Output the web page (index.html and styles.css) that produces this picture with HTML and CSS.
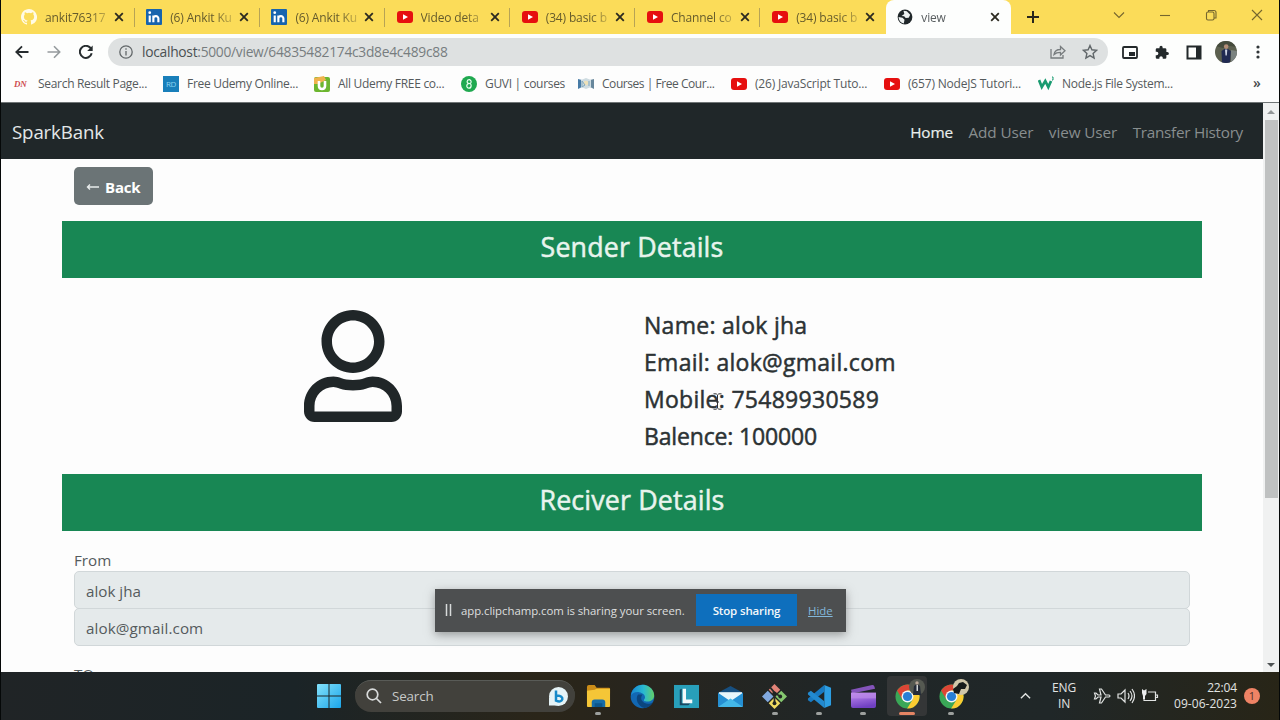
FILE: index.html
```html
<!DOCTYPE html>
<html lang="en">
<head>
<meta charset="utf-8">
<title>view</title>
<link rel="stylesheet" href="styles.css">
</head>
<body>
<svg class="defs" width="0" height="0" aria-hidden="true">
  <symbol id="youtube" viewBox="0 0 16 12"><rect width="16" height="12" rx="3" fill="#e60f0f"/><path d="M6 3.3v5.4L11 6z" fill="#fff"/></symbol>
  <symbol id="linkedin" viewBox="0 0 15 15"><rect width="15" height="15" rx="1" fill="#1764ae"/><path d="M3.5 6v6.5M6.9 12.5V6M6.9 9c0-3 4.7-3.2 4.7 0v3.5" fill="none" stroke="#fff" stroke-width="2"/><circle cx="3.5" cy="3.4" r="1.3" fill="#fff"/></symbol>
  <symbol id="cross" viewBox="0 0 10 10"><path d="M1.2 1.2l7.6 7.6M8.8 1.2L1.2 8.8" stroke="#2c2a20" stroke-width="1.8" fill="none"/></symbol>
  <symbol id="chrome" viewBox="0 0 26 26"><circle cx="13" cy="13" r="12.5" fill="#3aa757"/><path d="M2.2 6.8A12.5 12.5 0 0 1 23.8 6.8H13L7.6 16.2z" fill="#dd4535"/><path d="M23.8 6.8A12.5 12.5 0 0 1 12.6 25.5L18.4 16.2 13 6.8z" fill="#fccc31"/><circle cx="13" cy="13" r="6.2" fill="#f4f6f4"/><circle cx="13" cy="13" r="4.8" fill="#287fd6"/></symbol>
</svg>
<div class="screen">
  <header class="tabs">
    <div class="tab"><svg class="fav" viewBox="0 0 16 16"><path fill="#fffbe6" d="M8 0C3.58 0 0 3.58 0 8c0 3.54 2.29 6.53 5.47 7.59.4.07.55-.17.55-.38v-1.49c-2.01.37-2.53-.49-2.69-.94-.09-.23-.48-.94-.82-1.13-.28-.15-.68-.52-.01-.53.63-.01 1.08.58 1.23.82.72 1.21 1.87.87 2.33.66.07-.52.28-.87.51-1.07-1.78-.2-3.64-.89-3.64-3.95 0-.87.31-1.59.82-2.15-.08-.2-.36-1.02.08-2.12 0 0 .67-.21 2.2.82a7.6 7.6 0 0 1 4 0c1.53-1.04 2.2-.82 2.2-.82.44 1.1.16 1.92.08 2.12.51.56.82 1.27.82 2.15 0 3.07-1.87 3.75-3.65 3.95.29.25.54.73.54 1.48v2.2c0 .21.15.46.55.38A8 8 0 0 0 8 0z"/></svg><span class="tab-name">ankit76317</span><svg class="close"><use href="#cross"/></svg></div>
    <div class="tab"><svg class="fav"><use href="#linkedin"/></svg><span class="tab-name">(6) Ankit Ku</span><svg class="close"><use href="#cross"/></svg></div>
    <div class="tab"><svg class="fav"><use href="#linkedin"/></svg><span class="tab-name">(6) Ankit Ku</span><svg class="close"><use href="#cross"/></svg></div>
    <div class="tab"><svg class="fav"><use href="#youtube"/></svg><span class="tab-name">Video deta</span><svg class="close"><use href="#cross"/></svg></div>
    <div class="tab"><svg class="fav"><use href="#youtube"/></svg><span class="tab-name">(34) basic b</span><svg class="close"><use href="#cross"/></svg></div>
    <div class="tab"><svg class="fav"><use href="#youtube"/></svg><span class="tab-name">Channel co</span><svg class="close"><use href="#cross"/></svg></div>
    <div class="tab last"><svg class="fav"><use href="#youtube"/></svg><span class="tab-name">(34) basic b</span><svg class="close"><use href="#cross"/></svg></div>
    <div class="tab active"><svg class="fav" viewBox="0 0 16 16"><circle cx="8" cy="8" r="7.4" fill="#20272a"/><path d="M1.500 8l4 .8 2 2-.7 3.600C4 14 1.800 11.600 1.500 8zM6.500 1.800l3.300.4 3.400 3.500-1.500 3-3 .3-1.500-1.700L4.600 7 7.300 5z" fill="#eef2f2"/></svg><span class="tab-name">view</span><svg class="close"><use href="#cross"/></svg></div>
    <svg class="new-tab" viewBox="0 0 12 12"><path d="M6 0v12M0 6h12" stroke="#28261c" stroke-width="2"/></svg>
    <div class="window-controls">
      <svg viewBox="0 0 12 12"><path d="M1 3.500l5 5 5-5"/></svg>
      <svg viewBox="0 0 12 12"><path d="M1 6.500h10"/></svg>
      <svg viewBox="0 0 12 12"><rect x="1.500" y="3" width="7.500" height="8" rx="1.500"/><path d="M3.500 3V1.500h5.500q2 0 2 2V9H9"/></svg>
      <svg viewBox="0 0 12 12"><path d="M1 1l10 10M11 1L1 11"/></svg>
    </div>
  </header>

  <div class="toolbar">
    <svg class="tool back" viewBox="0 0 14 14"><path d="M13.500 7H1.500M7 1.300L1.300 7 7 12.700" stroke="#262c2e" stroke-width="1.800"/></svg>
    <svg class="tool forward" viewBox="0 0 14 14"><path d="M.5 7h12M7 1.300L12.700 7 7 12.700" stroke="#959b9d" stroke-width="1.600"/></svg>
    <svg class="tool reload" viewBox="0 0 14 14"><path d="M12.700 8.300A6 6 0 1 1 11.300 2.800L12.500 4" stroke="#262c2e" stroke-width="2"/><path d="M13.700.5v5.500H8.200z" fill="#262c2e"/></svg>
    <div class="address">
      <svg class="info" viewBox="0 0 14 14"><circle cx="7" cy="7" r="6.200"/><path d="M7 6v4.500M7 3.300v1.500"/></svg>
      <span class="url"><b>localhost</b>:5000/view/64835482174c3d8e4c489c88</span>
      <svg class="share" viewBox="0 0 16 14"><path d="M1 4v9h12v-3M4 9.500C4.500 6 7 4.500 10.500 4.500V1.500L15 5.800 10.500 10V7.300C7.500 7.300 5.500 8 4 9.500z"/></svg>
      <svg class="star" viewBox="0 0 16 16"><path d="M8 1.500l1.900 4.300 4.600.5-3.400 3.100 1 4.600L8 11.600 3.900 14l1-4.600L1.500 6.300l4.600-.5z"/></svg>
    </div>
    <svg class="ext" viewBox="0 0 16 14"><rect x="1" y="1.500" width="14" height="11" rx="1" fill="none" stroke="#23292b" stroke-width="1.800"/><rect x="7" y="6.500" width="6" height="4" fill="#23292b"/></svg>
    <svg class="ext" viewBox="0 0 24 24"><path fill="#23292b" d="M20.500 11H19V7a2 2 0 0 0-2-2h-4V3.500a2.500 2.500 0 0 0-5 0V5H4a2 2 0 0 0-2 2v3.800h1.500a2.700 2.700 0 0 1 0 5.400H2V20a2 2 0 0 0 2 2h3.800v-1.500a2.700 2.700 0 0 1 5.400 0V22H17a2 2 0 0 0 2-2v-4h1.500a2.500 2.500 0 0 0 0-5z"/></svg>
    <svg class="ext" viewBox="0 0 16 14"><path d="M1.500 1h13v12h-13z" fill="none" stroke="#23292b" stroke-width="2"/><path d="M10 1h5v12h-5z" fill="#23292b"/></svg>
    <svg class="avatar" viewBox="0 0 22 22"><clipPath id="round"><circle cx="11" cy="11" r="11"/></clipPath><g clip-path="url(#round)"><path d="M0 0h22v22H0z" fill="#5c604f"/><path d="M0 0h22v6L15 5 8 7 0 5z" fill="#454b3c"/><path d="M7 22l-.5-12L9.500 8h3.500l2.800 2L15 22z" fill="#202a52"/><path d="M10 8.500h2.300l-.5 6H10.500z" fill="#cbd2e2"/><circle cx="11.200" cy="5.600" r="2.300" fill="#b38e78"/><path d="M16 9l6 1v12h-6z" fill="#7b8380"/></g></svg>
    <svg class="dots" viewBox="0 0 4 16"><circle cx="2" cy="3" r="1.600"/><circle cx="2" cy="8" r="1.600"/><circle cx="2" cy="13" r="1.600"/></svg>
  </div>

  <nav class="bookmarks">
    <div><span class="bm-icon dn">DN</span><span>Search Result Page...</span></div>
    <div><span class="bm-icon rd">RD</span><span>Free Udemy Online...</span></div>
    <div><svg class="bm-icon" viewBox="0 0 16 16"><rect y="1" width="16" height="15" rx="2" fill="#6cb62f"/><path d="M0 2l10-2 2 4-8 4-4 0z" fill="#efb34d"/><path d="M5 5v5q0 3 3 3t3-3V5" fill="none" stroke="#fff" stroke-width="2.600"/></svg><span>All Udemy FREE co...</span></div>
    <div><svg class="bm-icon" viewBox="0 0 16 16"><circle cx="8" cy="8" r="8" fill="#20a950"/><path d="M9.500 3.800c-4-.8-4.500 3.700-1.200 3.700 2.800 0 2.200 4.700-.3 4.700-3 0-3-4.700.3-4.700 2.500 0 2.400-3 .4-3.300" fill="none" stroke="#e8fff0" stroke-width="1.200"/></svg><span>GUVI | courses</span></div>
    <div><svg class="bm-icon" viewBox="0 0 16 16"><path d="M0 3l4 1v7l-4 2z" fill="#477ba6"/><path d="M16 3l-4 1v7l4 2z" fill="#67879c"/><path d="M3 4l5-2 5 2v7l-5 2-5-2z" fill="#cfdce1"/><circle cx="8" cy="7" r="2.300" fill="#eee1b8"/><path d="M4 5l3 4-3 2zM11 5v5" stroke="#81a7bb" fill="none"/></svg><span class="tight">Courses | Free Cour...</span></div>
    <div><svg class="bm-icon"><use href="#youtube"/></svg><span class="loose">(26) JavaScript Tuto...</span></div>
    <div><svg class="bm-icon"><use href="#youtube"/></svg><span class="loose">(657) NodeJS Tutori...</span></div>
    <div><svg class="bm-icon" viewBox="0 0 16 16"><path d="M1 4l2.800 7L7.300 5l3 6L13 5" fill="none" stroke="#199b70" stroke-width="2.700"/><path d="M14 1h1v3h-1" fill="none" stroke="#199b70"/></svg><span>Node.js File System...</span></div>
    <div class="more">»</div>
  </nav>

  <main class="viewport">
    <div class="page">
      <nav class="navbar">
        <span class="brand">SparkBank</span>
        <div class="links"><span class="current">Home</span><span>Add User</span><span>view User</span><span class="history">Transfer History</span></div>
      </nav>
      <div class="container">
        <button class="back-button"><svg viewBox="0 0 13 8"><path d="M13 4H2M4 1.500L1.500 4 4 6.500" fill="none" stroke="#e8ecec" stroke-width="1.400"/></svg>Back</button>
        <h2 class="banner">Sender Details</h2>
        <section class="sender">
          <div class="portrait"><svg viewBox="0 0 448 512"><path d="M313.600 304c-28.700 0-42.500 16-89.600 16-47.100 0-60.800-16-89.600-16C60.200 304 0 364.200 0 438.400V464c0 26.500 21.500 48 48 48h352c26.500 0 48-21.500 48-48v-25.600c0-74.200-60.200-134.400-134.400-134.400zM400 464H48v-25.600c0-47.600 38.800-86.400 86.400-86.400 14.600 0 38.300 16 89.600 16 51.700 0 74.900-16 89.600-16 47.600 0 86.400 38.800 86.400 86.400V464zM224 288c79.500 0 144-64.500 144-144S303.500 0 224 0 80 64.500 80 144s64.500 144 144 144zm0-240c52.900 0 96 43.100 96 96s-43.100 96-96 96-96-43.100-96-96 43.100-96 96-96z" fill="#202628"/></svg></div>
          <div class="facts"><p>Name: alok jha</p><p>Email: alok@gmail.com</p><p class="mobile">Mobile: 75489930589<svg class="ibeam" viewBox="0 0 9 17"><path d="M.5.800q3.500-.5 4 1.200.5-1.700 4-1.200M.5 16.200q3.500.5 4-1.200.5 1.700 4 1.200M4.500 2v13M3 9h3" fill="none" stroke="#333" stroke-width="1"/></svg></p><p class="balance">Balence: 100000</p></div>
        </section>
        <h2 class="banner">Reciver Details</h2>
        <section class="form"><label>From</label><div class="field">alok jha</div><div class="field email">alok@gmail.com</div><label class="to">TO</label></section>
      </div>
    </div>
    <div class="scrollbar"><i class="up"></i><div class="thumb"></div><i class="down"></i></div>
  </main>

  <footer class="taskbar">
    <div class="apps">
      <svg class="win" viewBox="0 0 24 24"><defs><linearGradient id="w" x2="1" y2="1"><stop stop-color="#83e1fb"/><stop offset="1" stop-color="#1ba5e9"/></linearGradient></defs><path d="M0 1q0-1 1-1h10.500v11.500H0zM12.500 0H23q1 0 1 1v10.500H12.500zM0 12.500h11.500V24H1q-1 0-1-1zM12.500 12.500H24V23q0 1-1 1H12.500z" fill="url(#w)"/></svg>
      <div class="search"><svg class="lens" viewBox="0 0 16 16"><circle cx="6.500" cy="6.500" r="5.300"/><path d="M10.500 10.500l4.500 4.500"/></svg><span>Search</span><svg class="bing" viewBox="0 0 19 19"><circle cx="9.500" cy="9.500" r="9.500" fill="#e5f3f7"/><path d="M0 10v8.500h9z" fill="#e5f3f7"/><path d="M7 3.500v10.200q5 2 6.300-1.300Q14 9 8 8.500" fill="none" stroke="#1689c9" stroke-width="2.500"/></svg></div>
      <div class="app run"><svg viewBox="0 0 26 26"><path d="M1 3q0-2 2-2h6l2 3h13q1 0 1 1v5H1z" fill="#cc8d18"/><path d="M1 7l8-1 2-1h14v18q0 1-1 1H2q-1 0-1-1z" fill="#f5c637"/><path d="M6 24v-5q0-3 3-3h8q3 0 3 3v5z" fill="#176da7"/><path d="M9 20h8v4H9z" fill="#0c568c"/></svg></div>
      <div class="app"><svg viewBox="0 0 26 26"><defs><linearGradient id="e" x2="1"><stop stop-color="#1787d4"/><stop offset=".55" stop-color="#29b9d1"/><stop offset="1" stop-color="#63cf67"/></linearGradient></defs><circle cx="13" cy="13" r="12.300" fill="#1268b4"/><path d="M1 12C3-1 19-3 24.300 8c3 8-3 11-8.300 10-2-.4-2-1.400-1-2.500C17 13 14 9 9.500 8.500 5 8 2 10 1 12z" fill="url(#e)"/><path d="M8.500 11C5 15 8 23.500 15 25c4-.5 7-2.500 9-6-4 2.500-9 2-11.500-1.500-1.500-2-1-4.500.5-6.500z" fill="#0b467f"/></svg></div>
      <div class="app"><svg viewBox="0 0 26 26"><path d="M0 1h26v24H0z" fill="#289fba"/><path d="M8 5v15h9l-2 2H6V6z" fill="#174762"/><path d="M9 5h3.500v11H19v4H9z" fill="#f2f8fa"/></svg></div>
      <div class="app"><svg viewBox="0 0 26 26"><path d="M0 9L13 2l13 7v3H0z" fill="#174f80"/><path d="M1 8.500h24v9H1z" fill="#e8f6fb"/><path d="M0 9l13 9 13-9v14q0 1-1 1H1q-1 0-1-1z" fill="#258fd2"/><path d="M0 24l13-9 13 9z" fill="#43b7e8"/></svg></div>
      <div class="app run"><svg viewBox="0 0 26 26"><path d="M13 0l6 6-6 6-6-6z" fill="#e28378"/><path d="M6 7l6 6-6 6-6-6z" fill="#81a9df"/><path d="M20 7l6 6-6 6-6-6z" fill="#85c76f"/><path d="M13 14l6 6-6 6-6-6z" fill="#f1db61"/><path d="M8 3l5 6v11M13 9l6 4" fill="none" stroke="#272a28" stroke-width="1.800"/><circle cx="13" cy="10" r="2.300" fill="#202322"/><circle cx="19" cy="13" r="2" fill="#202322"/><circle cx="13" cy="20" r="2" fill="#202322"/></svg></div>
      <div class="app run"><svg viewBox="0 0 26 26"><path d="M18 1l7 3v18l-7 3z" fill="#2c9ee3"/><path d="M18 1v7L4 19l-3-2v-2z" fill="#187ac2"/><path d="M1 11v-2l3-2 14 11v7z" fill="#228ad0"/></svg></div>
      <div class="app run"><svg viewBox="0 0 26 26"><defs><linearGradient id="p" x2=".3" y2="1"><stop stop-color="#c48df1"/><stop offset="1" stop-color="#7040c2"/></linearGradient></defs><path d="M0 6L22 1q2-.4 2.500 2l.5 2L1 10z" fill="#8454bb"/><path d="M0 9h26v14q0 2-2 2H2q-2 0-2-2z" fill="url(#p)"/><path d="M0 9h26v6H0z" fill="#be8ce8" opacity=".65"/></svg></div>
      <div class="app run chosen"><svg viewBox="0 0 26 26"><use href="#chrome"/></svg><svg class="person" viewBox="0 0 16 16"><circle cx="8" cy="8" r="8" fill="#555951"/><path d="M4 16l1-9 3-2 3 2 1 9z" fill="#242b38"/><path d="M7.500 6h1.500v6H7.500z" fill="#d0d5d5"/><circle cx="8" cy="4" r="1.700" fill="#b9a798"/></svg></div>
      <div class="app run"><svg viewBox="0 0 26 26"><use href="#chrome"/></svg><svg class="person" viewBox="0 0 16 16"><circle cx="8" cy="8" r="8" fill="#d0c6a9"/><path d="M0 10l4-3 2-3 4-1 4 3-2 4-4 0-2 5-5-1z" fill="#171b1b"/></svg></div>
    </div>
    <div class="tray">
      <svg class="chevron" viewBox="0 0 12 8"><path d="M1 6.500l5-5 5 5"/></svg>
      <span class="lang">ENG<br>IN</span>
      <svg class="status" viewBox="0 0 18 18"><path d="M1.500 6h1.500l2 2h3L6.500 2h2l4 6H16q2 1 0 2h-3.500l-4 6h-2L8 10H5l-2 2H1.500l1-3z"/></svg>
      <svg class="status" viewBox="0 0 18 18"><path d="M1 7h3l4-4v12l-4-4H1zM11 6q2 3 0 6M13 4q4 5 0 10M15 2q5 7 0 14"/></svg>
      <svg class="status" viewBox="0 0 18 18"><path d="M7 5h7.500v8.500H3V10M15 8h1.500v2.500H15"/><path d="M1 2l2 1.500L5.500 2v5L4 9v3H2V9L1 6z" fill="#eceeee" stroke="none"/></svg>
      <span class="clock">22:04<br><span class="date">09-06-2023</span></span>
      <span class="notice">1</span>
    </div>
  </footer>

  <div class="sharing"><svg class="pause" viewBox="0 0 7 12"><path d="M1.500 0v12M5.500 0v12" stroke="#d8dada" stroke-width="1.500"/></svg><span class="message">app.clipchamp.com is sharing your screen.</span><button>Stop sharing</button><a>Hide</a></div>
</div>
</body>
</html>
```
FILE: styles.css
```css
* { box-sizing: border-box; }
body { margin: 0; background: #000; font-family: "Open Sans", "Noto Sans", sans-serif; }
p, h2 { margin: 0; }
svg { display: block; flex: none; }
.defs { position: absolute; }
.screen { position: relative; width: 1280px; height: 720px; overflow: hidden; display: flex; flex-direction: column; padding: 0 1px; background: #050808; }

.tabs { height: 34px; flex: none; display: flex; background: #fbdc59; padding-left: 8.500px; }
.tab { width: 125.200px; flex: none; display: flex; align-items: center; padding-left: 11.500px; color: #655b2c; font-size: 12px; letter-spacing: -.15px; }
.tab::after { content: ""; width: 1px; height: 19px; background: #b7a355; margin-left: 9.500px; }
.fav { width: 16px; height: 16px; margin-right: 8px; }
.tab-name { width: 63px; white-space: nowrap; mask-image: linear-gradient(90deg, #000 70%, transparent 112%); }
.close { width: 10px; height: 10px; margin-left: 6px; }
.tab.last::after, .tab.active::after { visibility: hidden; }
.tab.active { background: #fdfefd; border-radius: 8px 8px 0 0; color: #595e60; width: 125px; }
.new-tab { width: 12px; height: 12px; margin: 11px 0 0 16.500px; }
.window-controls { display: flex; gap: 34px; margin: 8.500px 0 0 74px; }
.window-controls svg { width: 12px; height: 12px; fill: none; stroke: #75662e; stroke-width: 1.100; }

.toolbar { height: 36px; flex: none; display: flex; align-items: center; background: #fdfefd; padding-left: 14px; }
.tool { width: 14px; height: 14px; fill: none; }
.forward { margin-left: 18px; }
.reload { margin-left: 18px; }
.address { width: 1000px; height: 28px; margin: 0 14px 0 15px; border-radius: 14px; background: #dee1e1; display: flex; align-items: center; padding-left: 11px; }
.info { width: 14px; height: 14px; fill: none; stroke: #626769; stroke-width: 1.300; }
.url { margin-left: 9px; width: 910px; padding-bottom: 1px; font-size: 13.800px; letter-spacing: -.28px; color: #777d7f; }
.url b { font-weight: 400; color: #4a5052; }
.share { width: 16px; height: 14px; fill: none; stroke: #777c7e; stroke-width: 1.300; margin-left: -2px; }
.star { width: 16px; height: 16px; fill: none; stroke: #61676a; stroke-width: 1.400; margin-left: 16px; }
.ext { width: 16px; height: 15px; margin-right: 16px; }
.avatar { width: 22px; height: 22px; margin-left: -3px; }
.dots { width: 4px; height: 16px; margin-left: 19px; fill: #303638; }

.bookmarks { height: 32px; flex: none; padding: 0 0 4px 13px; display: grid; grid-template-columns: 149px 151px 147px 117px 153px 153px 154px 215px 20px; background: #fdfdfd; font-size: 12px; letter-spacing: -.3px; color: #555a5c; }
.bookmarks div { display: flex; align-items: center; white-space: nowrap; }
.bookmarks div > span:last-child { padding-bottom: 1px; }
.bookmarks .tight { letter-spacing: -.45px; }
.bookmarks .loose { letter-spacing: -.18px; }
.bm-icon { width: 16px; height: 16px; margin-right: 8px; }
.dn { color: #cf4d51; font: italic 700 9px/16px "Liberation Serif", serif; }
.rd { background: #197fba; color: #8bd2ef; font-size: 8px; line-height: 16px; text-align: center; }
.bookmarks .more { font-size: 14px; font-weight: 600; color: #454a4b; padding-bottom: 3px; }

.viewport { height: 570px; flex: none; display: flex; border-top: 1px solid #707576; background: #fdfdfd; overflow: hidden; }
.page { width: 1262px; }
.navbar { height: 56px; background: #202729; display: flex; align-items: center; justify-content: space-between; padding: 0 20px 0 11px; }
.brand { color: #e4e8e8; font-size: 18.700px; letter-spacing: -.15px; padding-top: 1px; }
.links { display: flex; gap: 15.500px; font-size: 15.300px; color: #888e8f; padding-top: 1px; letter-spacing: -.1px; }
.links .current { color: #e9eeed; -webkit-text-stroke: .2px; }
.links .history { letter-spacing: -.28px; }
.container { width: 1140px; margin-left: 61px; padding-top: 8px; }
.back-button { display: flex; align-items: center; gap: 6px; width: 79px; height: 38px; padding: 1px 0 0 12px; margin: 0 0 16px 12px; border: 0; border-radius: 5px; background: #6b7476; color: #fff; font: 700 15px "Open Sans", sans-serif; letter-spacing: -.2px; }
.back-button svg { width: 13px; height: 8px; }
.banner { height: 57px; background: #188754; color: #e8f4ed; text-align: center; font-size: 26.800px; line-height: 51px; font-weight: 500; letter-spacing: .15px; -webkit-text-stroke: .5px; }
.sender { height: 195.500px; display: flex; }
.portrait { width: 582px; padding: 32px 0 0 242px; }
.portrait svg { width: 98px; height: 112px; }
.facts { padding-top: 29px; color: #2c3234; font-size: 23px; letter-spacing: .28px; font-weight: 500; line-height: 36.900px; white-space: nowrap; -webkit-text-stroke: .5px; }
.mobile { position: relative; }
.balance { letter-spacing: -.15px; }
.ibeam { position: absolute; left: 69px; top: 12px; width: 9px; height: 17px; }
.form { padding: 18px 12px 0; color: #555b5d; font-size: 15.200px; }
.form label { display: block; height: 22px; line-height: 22px; }
.field { height: 38px; border: 1px solid #d1d7d9; border-radius: 5px; background: #e5eaeb; padding-left: 11px; line-height: 38px; }
.email { margin-top: -1px; letter-spacing: .1px; }
.form .to { margin-top: 17px; }
.scrollbar { width: 16px; background: #f0f1f1; display: flex; flex-direction: column; align-items: center; }
.up { margin-top: 7px; border: 4px solid transparent; border-top: 0; border-bottom-color: #929697; }
.thumb { width: 13px; height: 378px; margin-top: 6px; background: #bfc1c1; }
.down { margin-top: auto; margin-bottom: 5px; border: 4px solid transparent; border-bottom: 0; border-top-color: #4e5354; }

.taskbar { height: 48px; flex: none; display: flex; background: linear-gradient(90deg, #202426 0, #1b2427 23%, #2a2519 42%, #27251f 52%, #202627 65%, #202728 82%, #282517 100%); color: #e1e3e2; }
.apps { display: flex; align-items: center; padding-left: 316px; }
.win { width: 24px; height: 24px; }
.search { width: 220px; height: 32px; margin: 0 1px 0 14px; background: #42413c; border-radius: 16px; border-top: 1px solid #595b57; display: flex; align-items: center; padding: 0 7px 1px 11px; font-size: 13.400px; letter-spacing: -.15px; color: #c7c9c8; }
.lens { width: 16px; height: 16px; margin-right: 10px; fill: none; stroke: #d9dbdb; stroke-width: 1.700; }
.bing { width: 19px; height: 19px; margin-left: auto; }
.app { width: 44.200px; height: 40px; position: relative; display: flex; align-items: center; justify-content: center; }
.app > svg { width: 25px; height: 25px; }
.run::after { content: ""; position: absolute; bottom: 1px; width: 6px; height: 3px; border-radius: 2px; background: #9da09e; }
.chosen { background: #343637; border-radius: 4px; width: 40px; margin: 0 2px; }
.chosen::after { width: 16px; background: #e48564; }
.app .person { position: absolute; width: 16px; height: 16px; left: 22px; top: 3px; }
.app:last-child .person { left: 24px; }
.tray { flex: 1; display: flex; align-items: center; justify-content: flex-end; padding-right: 19px; font-size: 12px; line-height: 16px; }
.chevron { width: 11px; height: 8px; fill: none; stroke: #e1e3e2; stroke-width: 1.500; margin-right: 20px; }
.lang { width: 26px; text-align: center; margin-right: 16px; letter-spacing: -.2px; }
.status { width: 18px; height: 18px; margin-right: 6px; fill: none; stroke: #e1e3e2; stroke-width: 1.200; }
.clock { width: 66px; margin-left: 6px; text-align: right; white-space: nowrap; letter-spacing: -.15px; }
.date { letter-spacing: .03px; }
.notice { width: 16px; height: 16px; margin-left: 7px; border-radius: 50%; background: #ef8365; color: #4d302a; font-size: 11px; text-align: center; }

.sharing { position: absolute; left: 435px; top: 589px; width: 411px; height: 43px; background: #4d4f50; box-shadow: 0 3px 9px #5558; display: flex; align-items: center; padding: 0 0 1px 10px; color: #dedfdf; font-size: 11.400px; }
.pause { width: 7px; height: 12px; }
.message { width: 224px; margin: 0 11px 0 9px; white-space: nowrap; letter-spacing: -.05px; }
.sharing button { width: 101px; height: 32px; border: 0; padding: 0; background: #0e6fbd; color: #f4f8fa; font: 600 11.500px "Open Sans", sans-serif; letter-spacing: -.15px; }
.sharing a { margin-left: 11px; color: #83b7da; text-decoration: underline; }
```
